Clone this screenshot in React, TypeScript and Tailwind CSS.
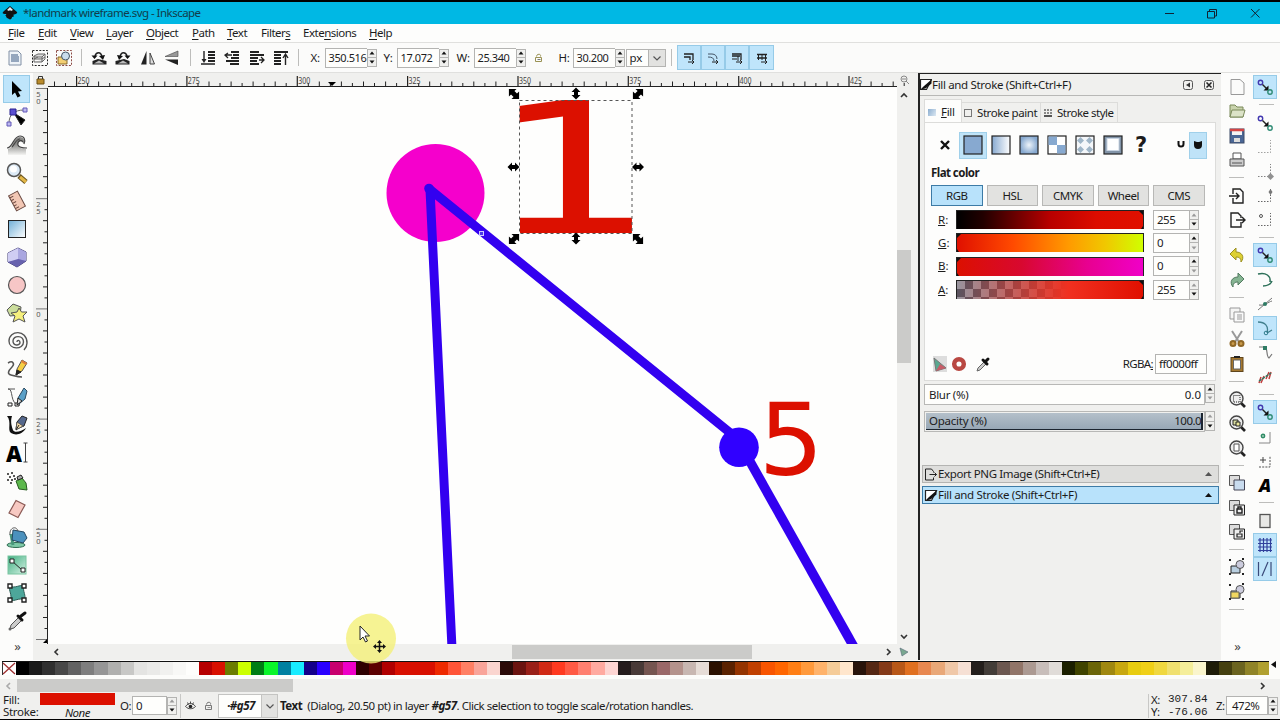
import React from 'react';

type IcoProps = { children: React.ReactNode; size?: number };

// every icon is drawn round its own centre, one unit per pixel
const Ico: React.FC<IcoProps> = ({ children, size = 24 }) => (
  <svg
    width={size}
    height={size}
    viewBox={`${-size / 2} ${-size / 2} ${size} ${size}`}
    fill="none"
    stroke="#222"
    strokeWidth="1"
    className="shrink-0"
  >
    {children}
  </svg>
);

const Sep: React.FC = () => <div className="h-[17px] w-px shrink-0 bg-[#bdbdbb]" />;

const Spin: React.FC<{ up?: boolean; down?: boolean; className?: string }> = ({ up = true, down = true, className = 'h-[18px]' }) => (
  <div className={`flex w-[10px] shrink-0 flex-col border border-[#b4b4b2] bg-[#f0f0ee] ${className}`}>
    <div className="flex flex-1 items-center justify-center border-b border-[#b4b4b2]">
      <svg width="6" height="4"><path d="M0.5 3.5L3 0.5L5.5 3.5Z" fill={up ? '#111' : '#999'} /></svg>
    </div>
    <div className="flex flex-1 items-center justify-center">
      <svg width="6" height="4"><path d="M0.5 0.5L3 3.5L5.5 0.5Z" fill={down ? '#111' : '#999'} /></svg>
    </div>
  </div>
);

const Chevron: React.FC<{ d: string; color?: string; width?: number }> = ({ d, color = '#333', width = 1.6 }) => (
  <svg width="10" height="10" viewBox="0 0 10 10" fill="none" stroke={color} strokeWidth={width}><path d={d} /></svg>
);

const menu = [
  { a: '', u: 'F', b: 'ile', w: 'w-[30px]' },
  { a: '', u: 'E', b: 'dit', w: 'w-[32px]' },
  { a: '', u: 'V', b: 'iew', w: 'w-[36px]' },
  { a: '', u: 'L', b: 'ayer', w: 'w-[40px]' },
  { a: '', u: 'O', b: 'bject', w: 'w-[46px]' },
  { a: '', u: 'P', b: 'ath', w: 'w-[35px]' },
  { a: '', u: 'T', b: 'ext', w: 'w-[34px]' },
  { a: 'Filter', u: 's', b: '', w: 'w-[42px]' },
  { a: 'Exte', u: 'n', b: 'sions', w: 'w-[66px]' },
  { a: '', u: 'H', b: 'elp', w: 'w-[30px]' },
];

const stack = <path d="M-6 -2L-2 -4H5L2 -1H-6ZM-6 1L-2 -1M-6 4H2L5 1M-6 -2V4M2 -1V4M5 -4V1M-6 1H2L5 -1" stroke="#666" fill="#ddd" />;

const selectIcons = [
  <g><path d="M-6 -7H3L6 -4V7H-6Z" fill="#eef3f8" stroke="#8190a5" /><path d="M-4 -3H3M-4 -1H4M-4 1H4M-4 3H4" stroke="#3d5b83" /></g>,
  <g><rect x="-7.5" y="-7.5" width="15" height="15" strokeDasharray="2 1.4" />{stack}</g>,
  <g><rect x="-7.5" y="-7.5" width="15" height="15" stroke="#8c4a44" strokeDasharray="2 1.4" /><path d="M-6 -1H3V6H-6Z" fill="#f3cf72" stroke="#8a6a2a" /><circle cx="1.5" cy="-2" r="4" fill="#c9dcec" stroke="#456" /></g>,
];

const flipIcons = [
  <g><path d="M-6.500 6V3L-1 1L7.500 3V6.500H-6.500Z" fill="#222" stroke="none" /><path d="M-5 5.500L0 2.500L5 5.500Z" fill="#bbb" stroke="none" /><path d="M-4 -2C-3 -6 2 -7 3 -1" strokeWidth="1.500" /><path d="M-7.500 -2.500H-1.500L-4.500 1ZM0 -2L4 2L6 -3Z" fill="#111" stroke="none" /></g>,
  <g><path d="M6.500 6V3L1 1L-7.500 3V6.500H6.500Z" fill="#222" stroke="none" /><path d="M5 5.500L0 2.500L-5 5.500Z" fill="#bbb" stroke="none" /><path d="M4 -2C3 -6 -2 -7 -3 -1" strokeWidth="1.500" /><path d="M7.500 -2.500H1.500L4.500 1ZM0 -2L-4 2L-6 -3Z" fill="#111" stroke="none" /></g>,
  <g><path d="M-1.500 -7V6.500H-7Z" fill="#222" stroke="none" /><path d="M2 -5L6.500 6H2Z" fill="#ddd" stroke="#444" /></g>,
  <g><path d="M-7 -1.500H6V-7Z" fill="#999" stroke="#444" strokeWidth=".6" /><path d="M-7 1.500H6V7Z" fill="#222" stroke="none" /></g>,
];

const orderIcons = [
  <g strokeWidth="2"><path d="M0 -6H7M0 -3H7M0 0H7M0 3H7" /><path d="M-7 6H7M-4 -7V3" strokeWidth="1.400" /><path d="M-6.500 1H-1.500L-4 5Z" fill="#222" stroke="none" /></g>,
  <g strokeWidth="2"><path d="M-1 -6H7M1 -3H7M-1 0H7M-6 3H7M-2 6H7" /><path d="M-7 -3H0M-4 -5L-7 -3L-4 0" strokeWidth="1.300" /></g>,
  <g strokeWidth="2"><path d="M-7 -6H2M-7 -3H7M-7 0H1M-7 3H0M-7 6H2" /><path d="M2 2H7M4 -1L7 2L4 5" strokeWidth="1.300" /></g>,
  <g strokeWidth="2"><path d="M-7 -6H7M-7 -3H0M-7 0H0M-7 3H0M-7 6H0" /><path d="M4.500 7V-3M2 0L4.500 -4L7 0" strokeWidth="1.400" /></g>,
];

const arrowDR = <path d="M-1 4H5M3 2L5 4L3 6" />;

const affectIcons = [
  <g><path d="M-5 -4H4V2M-5 -1H1V2" strokeWidth="1.300" />{arrowDR}</g>,
  <g><path d="M-5 -4H-1C2 -4 4 -2 4 1M-5 -1C-1 -1 1 0 1 3" stroke="#456" />{arrowDR}</g>,
  <g><path d="M-5 -4H4V2M-5 -2H3" strokeWidth="1.300" /><path d="M-5 1H0M1 -2V3" />{arrowDR}</g>,
  <g><path d="M-5 -3.500H5M-5 0H5" strokeWidth="1.300" /><path d="M-3.500 -4V2M0 -4V2M3.500 -4V2" />{arrowDR}</g>,
];

const tools = [
  <path d="M-5 -8V6L-2 3.500L0.500 8.500L3.500 7L1 2.500L5 2Z" fill="#000" stroke="none" />,
  <g><path d="M-8 6C-8 -2 -3 -7 7 -7" stroke="#666" /><path d="M-3 -4L8 3L4 8Z" fill="#000" /><path d="M-7 -8H-1V-2H-7Z" fill="#5a4fd0" stroke="#2a2390" /><path d="M6 -9H10V-5H6ZM-10 5H-6V9H-10Z" fill="#bdb8f0" stroke="#6258b8" /></g>,
  <g><path d="M-9 4C-4 4 -4 -8 3 -8C7 -8 8 -4 7 -1C5 -5 0 -4 1 0C2 3 6 4 9 4V10H-9Z" fill="url(#gWave)" stroke="none" /><path d="M-10 3C-4 3 -4 -9 3 -9C7 -9 9 -5 7 -1M6 -3C4 -6 0 -4 1 0C2 3 6 3 10 3M-5 2C-2 -1 -1 -6 3 -6" strokeWidth="1.200" stroke="#444" /></g>,
  <g><path d="M2 3L9 9" stroke="#6a5520" strokeWidth="5" /><path d="M3 4L9 9" stroke="#e2b647" strokeWidth="3" /><circle cx="-3" cy="-3" r="6.500" fill="#dceaf6" stroke="#555" strokeWidth="1.500" /><circle cx="-3.500" cy="-4" r="3.500" fill="#fff" stroke="none" /></g>,
  <g transform="rotate(-28)"><rect x="-5" y="-8.500" width="10" height="17" fill="#f2c7b4" stroke="#6b4a42" /><path d="M-5 -6H-1M-5 -3H-2M-5 0H-1M-5 3H-2M-5 6H-1" stroke="#6b4a42" /></g>,
  <rect x="-8.500" y="-8.500" width="17" height="17" fill="url(#gRect)" />,
  <g stroke="#433f75"><path d="M-9 -4L1 -9L9 -5V4L0 10L-9 5Z" fill="#8a86cc" /><path d="M-9 -4L1 -9V3L-9 5Z" fill="#cfcdf3" stroke="none" /><path d="M1 -9L9 -5V4L1 2Z" fill="#aaa7e0" stroke="none" /><path d="M-9 5L1 2L9 4L0 10Z" fill="#6762ae" stroke="none" /></g>,
  <circle r="8.500" fill="#f7c6c6" stroke="#555" strokeWidth="1.2" />,
  <g stroke="#555"><path d="M-10 -3L-4 -9L4 -6L3 2L-7 3Z" fill="#cbdd9c" /><path d="M2 -5L4.500 -1L10 -1L6 3L8 9L2 6L-4 9L-2 3L-6 0L0 -1Z" fill="#f5ef7c" /></g>,
  <path d="M0 1C0 -1.500 3 -1 3 1.500C3 5 -4 5 -4 0C-4 -6 6.500 -6 6.500 1C6.500 9 -8 9 -8 0C-8 -11 10 -12 10 2C10 5 9 7 7 9" stroke="#555" strokeWidth="1.400" />,
  <g><path d="M-9 -6C-4 -9 -2 -5 -5 -2C-9 2 -10 5 -6 6C-2 7 1 8 5 8" strokeWidth="1.500" stroke="#555" /><path d="M-1 6L0 0L5 -9L10 -6L5 2Z" fill="#f6cf45" stroke="#555" /><path d="M5 -9L10 -6L9 -4L4 -7Z" fill="#e0803c" stroke="none" /><path d="M-1 6L0 1L4 3Z" fill="#222" /></g>,
  <g><path d="M-9 -8C-3 -9 -8 8 3 8M-9 -8H-2" stroke="#555" /><path d="M-9 6H-5V9H-9ZM-2 6H2V9H-2Z" fill="#fff" /><path d="M1 1L7 -9L10 -6L8 2L2 7Z" fill="#5aa0c8" stroke="#2c4a60" /><path d="M1 1L5 4L0 8Z" fill="#ddd" /></g>,
  <g><path d="M-10 -9H-5C-7 -3 -5 2 -4 5C-3 8 4 7 9 3C6 9 -1 11 -6 8C-10 5 -5 -3 -10 -9Z" fill="#111" stroke="none" /><path d="M-1 4L0 -3L5 -9L10 -7L7 1Z" fill="#55688c" /><path d="M-1 5L0 -3L6 1Z" fill="#f6dca8" stroke="#555" /><path d="M-1 5L2 0" /></g>,
  <g><path d="M6.500 -10H10.500M8.500 -10V9M6.500 9H10.500" stroke="#444" /></g>,
  <g><path d="M-10 -7h2M-6 -8h2M-8 -4h2M-4 -5h2M-10 -1h2M-6 -1h2M-3 -2h2M-7 2h2" strokeWidth="1.600" /><path d="M-1 0L5 -3L9 2L10 9L2 8Z" fill="#5cb84c" stroke="#285c20" /><path d="M0 -4L4 -6L6 -3L1 -1Z" fill="#aaa" /></g>,
  <path d="M-1 -8.500L8 -4L1 8.500L-8 4Z" fill="#f7c9c2" stroke="#8a5a55" strokeWidth="1.200" />,
  <g><ellipse cx="-1" cy="8" rx="9" ry="2.500" fill="#7ec9a7" stroke="#2e6b50" /><path d="M-6 -3L-4 8" stroke="#49977a" strokeWidth="3" /><path d="M-4 -7L7 -5L10 1L6 6L-5 3Z" fill="#4b91bd" stroke="#234760" /><path d="M-7 -2C-8 -9 -1 -12 1 -6" stroke="#555" /></g>,
  <g><rect x="-9" y="-9" width="18" height="18" fill="url(#gGreen)" stroke="#78c4a0" /><path d="M-5 -4L5 5" /><path d="M-7 -6H-3V-2H-7ZM4 3H8V7H4Z" fill="#fff" /></g>,
  <g><path d="M-7 -7C-2 -4 3 -9 7 -7C5 -2 10 3 7 7C2 4 -2 9 -7 7C-4 2 -9 -2 -7 -7Z" fill="#4da69a" stroke="#2c5f58" /><path d="M-9 -9H-5V-5H-9ZM5 -9H9V-5H5ZM-9 5H-5V9H-9ZM5 5H9V9H5Z" fill="#fff" strokeWidth="1.400" /></g>,
  <g><path d="M-7 8L-6 4L2 -4L5 -1L-3 7Z" fill="#ccc" stroke="#555" /><path d="M1 -5L5 -1M4 -5L8 -8" strokeWidth="3" stroke="#111" strokeLinecap="round" /><circle cx="-7" cy="8" r="1.500" fill="#666" stroke="none" /></g>,
];

const lens = (
  <g><path d="M4 4L8 8" strokeWidth="2.600" /><circle r="6.500" cx="-.5" cy="-.5" fill="#eee" stroke="#444" strokeWidth="1.400" /></g>
);
const dup = <path d="M-7.500 -7.500H2.500V2.500H-7.500Z" fill="#ddd" stroke="#555" />;
const grp = <g><path d="M-6 -1H3V6H-6Z" fill="#b9cfe0" /><circle cx="3" cy="-2.500" r="4" fill="#ccd" stroke="#555" /><path d="M-8 -7h2M5 -8h2M-8 7h2M5 7h2" strokeWidth="2" /></g>;

const SEP = null;
const commands: (React.ReactNode | null)[] = [
  <path d="M-6 -7.500H3L7 -4V7.500H-6Z" fill="#fbfbfa" stroke="#999" />,
  <g stroke="#7b8a5b"><path d="M-7 6V-6H-2L0 -4H6V6Z" fill="#c9d3ad" /><path d="M-7 6L-5 -1H8L6 6Z" fill="#dce3c8" /></g>,
  <g><rect x="-7" y="-7" width="14" height="14" fill="#4a6796" stroke="#3c4a66" /><path d="M-5 -7H5V-1H-5Z" fill="#f4f4f4" stroke="none" /><path d="M-7 -6H7" stroke="#d44545" strokeWidth="2.500" /><path d="M-3 2H3V6H-3Z" fill="#ddd" stroke="none" /></g>,
  <g stroke="#555"><path d="M-4 -7H4V-1H-4Z" fill="#fff" /><path d="M-7 -1H7V6H-7Z" fill="#ccc" /><path d="M-5 3H5" /></g>,
  SEP,
  <g><path d="M-4 -2V-7H3L6 -4V7H-4V2" strokeWidth="1.400" /><path d="M-8 0H2M-1 -3L2 0L-1 3" strokeWidth="1.400" /></g>,
  <g><path d="M4 -2V-4L1 -7H-6V7H4V2" strokeWidth="1.400" /><path d="M-1 0H8M5 -3L8 0L5 3" strokeWidth="1.400" /></g>,
  SEP,
  <path d="M-7 -1L-1 -7V-3C5 -3 8 2 4 7C4 3 2 2 -1 2V5Z" fill="#ddd033" stroke="#9b9022" />,
  <path d="M7 -1L1 -7V-3C-5 -3 -8 2 -4 7C-4 3 -2 2 1 2V5Z" fill="#86b593" stroke="#527a60" />,
  SEP,
  <g stroke="#999"><path d="M-7 -7H3V4H-7Z" fill="#f5f5f4" /><path d="M-3 -3H7V7H-3Z" fill="#fafafa" /><path d="M0 0H5M0 2H5M0 4H5" /></g>,
  <g><path d="M-5 -8L2 3M5 -8L-2 3" stroke="#999" strokeWidth="2" /><circle cx="-4" cy="4.500" r="2.500" fill="#c99a4a" stroke="#8f6726" strokeWidth="2" /><circle cx="4" cy="4.500" r="2.500" fill="#c99a4a" stroke="#8f6726" strokeWidth="2" /></g>,
  <g><rect x="-6" y="-6.500" width="12" height="14" fill="#a5782f" stroke="#5f451c" /><path d="M-3.500 -4H3.500V5H-3.500Z" fill="#fff" stroke="#666" /><path d="M-3 -7H3" strokeWidth="2" /></g>,
  SEP,
  <g>{lens}<path d="M-3.500 -3.500H3V3H-3.500Z" strokeDasharray="1 1" /></g>,
  <g>{lens}<path d="M-4 -3H1V2H-4Z" fill="#d8dca0" /><path d="M-1 -1H3V3H-1Z" fill="#eae79a" /></g>,
  <g>{lens}<path d="M-3 -4H2V3H-3Z" fill="#fff" stroke="#555" /></g>,
  SEP,
  <g>{dup}<path d="M-3 -3H7.500V7H-3Z" fill="#c9dcef" stroke="#445" /></g>,
  <g>{dup}<path d="M-3 -3H7.500V7H-3Z" fill="#eee" /><path d="M0 1H5V5H0ZM1 1V-1H4V1" strokeWidth="1.400" /></g>,
  <g>{dup}<path d="M-3 -3H7.500V7H-3Z" fill="#eee" /><path d="M0 2H5V5H0ZM3 1V-1H6" strokeWidth="1.200" /></g>,
  SEP,
  grp,
  <g>{grp}<path d="M-6 0H2V6H-6Z" fill="#f0d860" stroke="#665" /></g>,
  SEP,
];

const link = (
  <g><circle cx="-4.500" cy="-4.500" r="2.200" stroke="#4238b0" strokeWidth="1.400" /><path d="M-2.500 -2.500L2 2" strokeWidth="1.400" /><path d="M3.500 3.500V-1.500L-1.500 3.500Z" fill="#111" stroke="none" /><circle cx="5" cy="5" r="2.200" stroke="#2e8b74" strokeWidth="1.400" /></g>
);
const corner = <path d="M-7 5.500H5.500V-7" stroke="#666" strokeDasharray="1.500 1.500" />;

const snaps: ({ on?: boolean; icon: React.ReactNode } | null)[] = [
  { on: true, icon: link },
  SEP,
  { icon: link },
  { icon: <g opacity=".6">{corner}</g> },
  { icon: <g opacity=".8">{corner}<path d="M5.500 2L9 5.500L5.500 9L2 5.500Z" fill="#777" stroke="none" /></g> },
  { icon: <g>{corner}<path d="M5.500 -7L7.500 -4L5.500 -1L3.500 -4Z" fill="#777" stroke="none" /></g> },
  { icon: <g>{corner}<circle cx="-4" cy="-4" r="1.500" stroke="#555" /></g> },
  SEP,
  { on: true, icon: link },
  { icon: <path d="M-7 -6C1 -8 6 -4 5 2M-2 6C2 6 6 4 7 1" stroke="#2d7059" strokeWidth="1.500" /> },
  { icon: <g><path d="M-7 6L7 -6M-6 1C0 2 3 -2 7 -3" stroke="#777" /><circle r="2" fill="#2e7b64" stroke="none" /></g> },
  { on: true, icon: <g><path d="M-7 -6C0 -6 4 -2 2 5M2 5L7 2" stroke="#42808f" strokeWidth="1.300" /><circle cx="1" cy="5" r="1.800" stroke="#2e7b8b" /></g> },
  { icon: <g><path d="M-6 -5H0C3 -3 1 4 4 6L7 2" stroke="#777" strokeWidth="1.200" /><path d="M-2 -6H2V-2H-2Z" fill="#2e7b64" stroke="none" /></g> },
  { icon: <g strokeWidth="1.500"><path d="M-6 6L-4 0M-4 6L-1 -1M1 2L4 -5M4 2L6 -5" stroke="#c24040" /><path d="M-6 4L6 -4" stroke="#2e7b64" strokeDasharray="3 1" /></g> },
  SEP,
  { on: true, icon: link },
  { icon: <g><path d="M-6 6H5V-5" stroke="#888" /><circle cx="-2" cy="-1" r="1.600" stroke="#2e8b64" strokeWidth="1.600" /></g> },
  { icon: <g><path d="M-6 6H5V-5" stroke="#555" strokeDasharray="2 1.200" /><path d="M-5 -1H1M-2 -4V2" stroke="#444" /></g> },
  { icon: 'A' },
  SEP,
  { icon: <rect x="-5" y="-6.500" width="10" height="13" fill="#e8e8e6" stroke="#555" strokeWidth="1.300" /> },
  { on: true, icon: <path d="M-7 -5H7M-7 -1.500H7M-7 2H7M-7 5.500H7M-5 -7V7M-1.500 -7V7M2 -7V7M5.500 -7V7" stroke="#2f3f9c" strokeWidth="1.200" /> },
  { on: true, icon: <path d="M-6.500 -7V7M6 -7V7M-3 7L3 -7" stroke="#3a4a7a" strokeWidth="1.200" /> },
];

const palette = [
  '#000', '#1a1a1a', '#303030', '#484848', '#626262', '#7e7e7e', '#969696', '#b0b0ae', '#c8c8c6', '#e4e4e2', '#eaeae8', '#f1f1ef', '#f8f8f6', '#fefefc',
  '#b60000', '#d81000', '#6b7d00', '#ccff00', '#007d14', '#0af52a', '#0080a0', '#18ecff', '#14008a', '#2a00ff', '#c8006e', '#ee00c8',
  '#2e0000', '#5c0000', '#b00000', '#d81000', '#d81000', '#d81000', '#ee2a00', '#ff5538', '#ff8064', '#f9a59a', '#fad5cf',
  '#2b0b08', '#6b1410', '#992018', '#d02a15', '#ff3a20', '#ff5a44', '#ff8070', '#ffaaa0', '#fdd5d2',
  '#241c1c', '#483a37', '#755550', '#9a6868', '#b4938c', '#c8b7b1', '#e6dcd6',
  '#2b1100', '#5a2200', '#943400', '#c04000', '#f85500', '#ff6600', '#ff7f15', '#ff9a3c', '#ffb36b', '#f5cc98', '#ffe6cc',
  '#28140b', '#552814', '#843a18', '#b85818', '#e07020', '#e88850', '#e9a878', '#f0c8a8', '#f6e0d4',
  '#241f1c', '#433d38', '#6c5850', '#917568', '#ac9a92', '#c8beba', '#e0dcd8',
  '#1c2000', '#404400', '#6b6508', '#a08810', '#c8a810', '#e8cc10', '#f0d018', '#f0d840', '#f0e070', '#f5ee9a', '#faf5cc',
  '#1e1c08', '#454010', '#6b6420', '#908428', '#b0a030',
];

const Field: React.FC<{ label: string; value: string; lw: string }> = ({ label, value, lw }) => (
  <div className="flex shrink-0 items-center">
    <span className={`shrink-0 ${lw}`}>{label}</span>
    <span className="flex h-[20px] w-[42px] shrink-0 items-center border border-r-0 border-[#b4b4b2] bg-[#fefefc] pl-[3px] text-[11px] tracking-[-0.4px]">{value}</span>
    <Spin />
  </div>
);

const TopRuler: React.FC = () => (
  <svg width="863" height="14" viewBox="48 73 863 14" className="shrink-0">
    <path d="M48 86.500H897" stroke="#222" />
    {Array.from({ length: 78 }, (_, i) => {
      const x = 54.500 + i * 11.035;
      const k = (i - 2 + 10) % 10;
      return <path key={i} d={`M${x.toFixed(1)} 86V${k === 0 ? 76 : k % 2 ? 83 : 81.500}`} stroke="#222" strokeWidth={k === 0 ? 1.2 : 1} />;
    })}
    {[250, 275, 300, 325, 350, 375, 400, 425].map((n, i) => (
      <text key={n} x={77.5 + i * 110.35} y="83.500" fontSize="8.500" textLength="12" lengthAdjust="spacingAndGlyphs" fill="#444">{n}</text>
    ))}
    <path d="M328 82H336L332 86Z" fill="#000" />
    <g fill="none" stroke="#888"><circle cx="904" cy="79" r="3" /><path d="M902 79H906M906 81L909 84" /></g>
  </svg>
);

const LeftRuler: React.FC = () => (
  <svg width="15" height="573" viewBox="33 87 15 573" className="shrink-0">
    <path d="M47.500 88V644" stroke="#222" />
    {Array.from({ length: 51 }, (_, i) => {
      const y = 88.500 + i * 11.02;
      const k = i % 10;
      return <path key={i} d={`M47 ${y.toFixed(1)}H${k === 0 ? 36 : k % 2 ? 44.500 : 43}`} stroke={k === 0 ? '#777' : '#222'} />;
    })}
    {['50', '25', '0', '-25', '-50'].map((s, i) =>
      s.split('').map((c, j) => (
        <text key={`${i}-${j}`} x="38.500" y={(s[0] === '-' ? 89.500 : 96.500) + i * 110.2 + j * 7} textAnchor="middle" fontSize="7.500" fill="#555">{c}</text>
      ))
    )}
    <path d="M43 643L47 639V643Z" fill="#000" />
  </svg>
);

const handles = [
  [514, 94, 45, 1.2], [576, 93.5, 90, 1], [638, 94, -45, 1.2],
  [513.5, 167, 0, 1], [638, 167, 0, 1],
  [514, 239, -45, 1.2], [576, 238.5, 90, 1], [638, 239, 45, 1.2],
];

const Canvas: React.FC = () => (
  <svg width="849" height="557" viewBox="48 87 849 557" className="shrink-0 bg-[#fefefd]">
    <clipPath id="numeral"><rect x="519.700" y="99" width="113" height="136" /></clipPath>
    <circle cx="435.500" cy="193" r="49" fill="#f500cc" />
    <g stroke="#3300f0" strokeWidth="9" fill="none" strokeLinejoin="round">
      <path d="M452 648L430 189.500L739 440" />
      <path d="M743 449L854.500 648" strokeWidth="9.500" />
    </g>
    <circle cx="429" cy="188.500" r="4.800" fill="#3300f0" />
    <circle cx="739" cy="447.300" r="19.800" fill="#3000ff" />
    <rect x="479.500" y="231.500" width="4" height="4" fill="#4a35e8" stroke="#cfc8ff" />
    <g clipPath="url(#numeral)">
      <text transform="translate(486.900 233) scale(1.462 1)" fontFamily='"DejaVu Sans", sans-serif' fontSize="182.400" fill="#dc1000">1</text>
    </g>
    <text transform="translate(758.500 474.600) scale(1.030 1)" fontFamily='"DejaVu Sans", sans-serif' fontSize="99.600" fill="#dc1000">5</text>
    <rect x="519.500" y="100.500" width="112.500" height="133" fill="none" stroke="#555" strokeDasharray="3 3" />
    {handles.map(([x, y, r, s], i) => (
      <path key={i} transform={`translate(${x} ${y}) rotate(${r}) scale(${s})`} d="M-6 0L-1.500 -4.500V-2H1.500V-4.500L6 0L1.500 4.500V2H-1.500V4.500Z" fill="#000" />
    ))}
  </svg>
);

const sliders = [
  { name: 'R', value: '255', bg: 'bg-[linear-gradient(90deg,#000_0%,#200_14%,#b80000_50%,#dc0c00_75%,#e01000_100%)]', max: true },
  { name: 'G', value: '0', bg: 'bg-[linear-gradient(90deg,#e01000_0%,#ff4a00_30%,#ff9a00_60%,#f0c800_80%,#d0ff00_100%)]', max: false },
  { name: 'B', value: '0', bg: 'bg-[linear-gradient(90deg,#dc1000_0%,#d80830_35%,#e80090_70%,#f000c8_100%)]', max: false },
  { name: 'A', value: '255', bg: 'bg-[linear-gradient(90deg,rgba(220,16,0,0)_0%,#f03020_60%,#e01000_100%),repeating-conic-gradient(#5a5460_0_25%,#98949e_0_50%)] bg-[size:100%_100%,16px_16px]', max: true },
];

const paints = [
  <path d="M-4 -4L4 4M4 -4L-4 4" stroke="#111" strokeWidth="2.400" />,
  <rect x="-9" y="-9" width="18" height="18" fill="#87a9d0" strokeWidth="1.200" />,
  <rect x="-9" y="-9" width="18" height="18" fill="url(#gLin)" strokeWidth="1.200" />,
  <rect x="-9" y="-9" width="18" height="18" fill="url(#gRad)" strokeWidth="1.200" />,
  <g><rect x="-9" y="-9" width="18" height="18" fill="#fff" strokeWidth="1.200" /><path d="M-8.500 -8.500H0V0H-8.500ZM0 0H8.500V8.500H0Z" fill="#87a9d0" stroke="none" /></g>,
  <g><rect x="-9" y="-9" width="18" height="18" fill="#f4f7fa" strokeWidth="1.200" /><path d="M-4.500 -8L-1 -4.500L-4.500 -1L-8 -4.500ZM4.500 -8L8 -4.500L4.500 -1L1 -4.500ZM-4.500 1L-1 4.500L-4.500 8L-8 4.500ZM4.500 1L8 4.500L4.500 8L1 4.500Z" fill="#9fb6c8" stroke="none" /></g>,
  <g><rect x="-9" y="-9" width="18" height="18" fill="#8294a8" strokeWidth="1.200" /><rect x="-6" y="-6.500" width="12" height="12" fill="#fff" stroke="#c8d4e2" /></g>,
];

const penIcon = <g><path d="M-5 -5H6L1 5H-5Z" fill="#fff" strokeWidth="1.200" /><path d="M6 -5L-2 2L-5 5L0 4L6 -1Z" fill="#111" stroke="none" /></g>;
const exportIcon = <g><path d="M3 -2V-3L1 -5.500H-5V5.500H3V3M-1 0H6M4 -2L6 0L4 2" /></g>;

const FillStroke: React.FC = () => (
  <div className="flex w-[303px] shrink-0 flex-col border-l-2 border-t border-[#222] bg-[#f0f0ee]">
    <div className="flex h-[22px] shrink-0 items-center border-b border-[#b8b8b6]">
      <div className="-ml-px flex shrink-0"><Ico size={13}>{penIcon}</Ico></div>
      <span className="w-[250px] shrink-0 tracking-[-0.33px]">Fill and Stroke (Shift+Ctrl+F)</span>
      <Ico size={12}><rect x="-4.500" y="-4.500" width="9" height="9" rx="2" stroke="#555" /><path d="M2 -2.500V2.500L-2 0Z" fill="#333" stroke="none" /></Ico>
      <span className="w-[9px]" />
      <Ico size={12}><rect x="-4.500" y="-4.500" width="9" height="9" rx="2" stroke="#555" /><path d="M-2.500 -2.500L2.500 2.500M2.500 -2.500L-2.500 2.500" strokeWidth="1.500" /></Ico>
    </div>
    <div className="flex h-[26px] shrink-0 items-end pl-[4px] pt-[3px]">
      <div className="flex h-[23px] w-[38px] items-center gap-[5px] border border-b-0 border-[#dcdcda] bg-[#fdfdfc] pl-[3px] pt-[2px]">
        <span className="h-[7px] w-[8px] bg-[linear-gradient(120deg,#8caed0,#dce8f2)]" />
        <span className="tracking-[-0.3px]"><u>F</u>ill</span>
      </div>
      <div className="flex h-[20px] w-[79px] items-center gap-[5px] border-r border-t border-[#dcdcda] pl-[2px]">
        <span className="h-[8px] w-[8px] border border-[#777]" />
        <span className="whitespace-nowrap tracking-[-0.42px]">Stroke paint</span>
      </div>
      <div className="flex h-[20px] w-[77px] items-center gap-[4px] border-r border-t border-[#dcdcda] pl-[2px]">
        <Ico size={10}><path d="M-4 -3H4M-4 0H4" strokeDasharray="2 1" /><path d="M-4 3H4" strokeWidth="1.500" /></Ico>
        <span className="whitespace-nowrap tracking-[-0.5px]">Stroke style</span>
      </div>
    </div>
    <div className="mx-[4px] flex h-[259px] w-[292px] shrink-0 flex-col border border-[#dcdcda] bg-[#fdfdfc] pl-[6px]">
      <div className="mt-[8px] flex h-[28px] items-center">
        {paints.map((p, i) => (
          <div key={i} className={`flex h-[27px] w-[28px] shrink-0 items-center justify-center ${i === 1 ? 'border border-[#a0d0ea] bg-[#bfe3f8]' : ''}`}>
            <Ico size={22}>{p}</Ico>
          </div>
        ))}
        <span className="w-[28px] text-center font-[DejaVu_Sans] text-[21px] font-bold leading-none">?</span>
        <span className="w-[17px]" />
        <div className="flex w-[17px] justify-center"><Ico size={14}><path d="M-2.500 -4V-1A2.500 2.500 0 1 0 2.500 -1V-4" strokeWidth="2" stroke="#111" /></Ico></div>
        <div className="flex h-[27px] w-[18px] items-center justify-center border border-[#a0d0ea] bg-[#bfe3f8]">
          <Ico size={14}><path d="M-4 -4L-1 -3H1L4 -4V0A4 4 0 0 1 -4 0Z" fill="#111" stroke="none" /></Ico>
        </div>
      </div>
      <div className="mt-[4px] flex h-[20px] items-center font-bold tracking-[-0.55px]">Flat color</div>
      <div className="mt-[2px] flex h-[21px] gap-[4px]">
        {['RGB', 'HSL', 'CMYK', 'Wheel', 'CMS'].map((m, i) => (
          <div key={m} className={`flex w-[51.5px] items-center justify-center border tracking-[-0.5px] ${i === 0 ? 'border-[#3d7ba6] bg-[#b8e2fb]' : 'border-[#b8b8b6] bg-[#e2e2e0]'}`}>{m}</div>
        ))}
      </div>
      <div className="mt-[2px] flex flex-col">
        {sliders.map((s) => (
          <div key={s.name} className="flex h-[23.3px] items-center">
            <span className="w-[25px] shrink-0 pl-[7px]"><u>{s.name}</u>:</span>
            <div className={`flex h-[19px] w-[188px] shrink-0 border border-b-0 border-[#222] ${s.bg} ${s.max ? 'justify-end' : 'justify-start'}`}>
              <svg width="5" height="18"><path d={s.max ? 'M1 0H5V4ZM3 18H5V15Z' : 'M0 0H4L0 4ZM0 15V18H2Z'} fill="#111" /></svg>
            </div>
            <div className="ml-[9px] flex h-[20px] w-[36px] items-center border border-r-0 border-[#b4b4b2] bg-[#fefefc] pl-[3px] tracking-[-0.5px]">{s.value}</div>
            <Spin up={!s.max} down={s.max} className="h-[20px]" />
          </div>
        ))}
      </div>
      <div className="mt-[52px] flex h-[21px] items-center">
        <Ico size={18}><rect x="-7" y="-8" width="14" height="16" fill="#ddd" stroke="none" /><path d="M-6 -6L6 4L-4 7Z" fill="#5aa890" stroke="#777" /><path d="M0 0L6 4L-4 7Z" fill="#c85c68" stroke="none" /></Ico>
        <Ico size={20}><circle r="4.800" stroke="#b94842" strokeWidth="4.500" /></Ico>
        <span className="w-[4px]" />
        <Ico size={20}><path d="M-6 7L-5 4L1 -2L3 0L-3 6Z" fill="#ccc" stroke="#666" /><path d="M0 -4L4 0M3 -3L5 -5" strokeWidth="3" stroke="#111" strokeLinecap="round" /></Ico>
        <span className="ml-auto tracking-[-0.65px]">RGBA<u>:</u></span>
        <span className="ml-[2px] mr-[8px] flex h-[20px] w-[52px] items-center border border-[#b4b4b2] bg-[#fefefc] pl-[3px] tracking-[-0.45px]">ff0000ff</span>
      </div>
    </div>
    <div className="ml-[4px] mt-[3px] flex h-[21px] shrink-0">
      <div className="flex w-[281px] items-center justify-between border border-[#b8b8b6] bg-[#fefefc] pl-[4px] pr-[3px]"><span className="tracking-[-0.3px]">Blur (%)</span><span>0.0</span></div>
      <Spin down={false} className="h-[19px]" />
    </div>
    <div className="ml-[4px] mt-[6px] flex h-[21px] shrink-0">
      <div className="w-[281px] border border-[#b8b8b6] p-px">
        <div className="flex h-full items-center justify-between border-b border-r-2 border-[#1c2530] bg-[linear-gradient(#b4c0ca,#98a8b6)] pl-[3px]"><span className="tracking-[-0.25px]">Opacity (%)</span><span className="tracking-[-0.55px]">100.0</span></div>
      </div>
      <Spin up={false} className="h-[20px]" />
    </div>
    <div className="mx-[2px] mt-[33px] flex h-[18px] w-[297px] shrink-0 items-center border border-[#b4b4b2] bg-[#dededc]">
      <Ico size={15}>{exportIcon}</Ico>
      <span className="flex-1 tracking-[-0.38px]">Export PNG Image (Shift+Ctrl+E)</span>
      <svg width="18" height="4"><path d="M5 4L8.500 0L12 4Z" fill="#555" /></svg>
    </div>
    <div className="mx-[2px] mt-[3px] flex h-[18px] w-[297px] shrink-0 items-center border border-[#3d7ba6] bg-[#b8e2fb]">
      <Ico size={15}>{penIcon}</Ico>
      <span className="flex-1 tracking-[-0.33px]">Fill and Stroke (Shift+Ctrl+F)</span>
      <svg width="18" height="4"><path d="M5 4L8.500 0L12 4Z" fill="#111" /></svg>
    </div>
  </div>
);

const App: React.FC = () => (
  <div className="relative flex h-[720px] w-[1280px] flex-col overflow-hidden border-b border-black bg-[#f0f0ee] font-['Noto_Sans',sans-serif] text-[11.5px] leading-none text-[#1c1c1c]">
    <svg width="0" height="0" className="absolute">
      <defs>
        <linearGradient id="gRect" x2="1" y2="1"><stop stopColor="#6faed6" /><stop offset="1" stopColor="#fff" /></linearGradient>
        <linearGradient id="gGreen" x2="1" y2="1"><stop stopColor="#3fae80" /><stop offset="1" stopColor="#d5f2e4" /></linearGradient>
        <linearGradient id="gWave" x2="0" y2="1"><stop offset=".4" stopColor="#8a8a88" /><stop offset="1" stopColor="#f4f4f2" /></linearGradient>
        <linearGradient id="gLin"><stop stopColor="#87a9d0" /><stop offset="1" stopColor="#fff" /></linearGradient>
        <radialGradient id="gRad"><stop stopColor="#eef4fa" /><stop offset="1" stopColor="#87a9d0" /></radialGradient>
      </defs>
    </svg>

    <header className="flex h-[24px] shrink-0 items-center border-t-2 border-black bg-[#00b8e4] pl-px text-[#123c4a]">
      <Ico size={18}>
        <path d="M0 -7L7 -1C8 1 4 1 3 2C5 3 3 4 2 4C2 6 0 7 -1 6C-2 5 -4 5 -4 3C-6 3 -3 2 -4 1C-8 1 -8 0 -6 -2Z" fill="#111" stroke="none" />
        <path d="M-3 -3L0 -6L3 -3L1 -2L0 -3L-1 -2Z" fill="#e8f0f4" stroke="none" />
      </Ico>
      <span className="ml-[4px] flex-1 tracking-[-0.53px]">*landmark wireframe.svg - Inkscape</span>
      <div className="flex w-[115px] items-center">
        <svg width="10" height="10" className="mr-[32px]"><path d="M0 5.500H9" stroke="#123" /></svg>
        <svg width="11" height="11" className="mr-[32px]" fill="none" stroke="#123"><path d="M0.500 3.500H7.500V10H0.500ZM2.500 3V1.500H9.500V8H8" /></svg>
        <svg width="11" height="11" stroke="#123"><path d="M1 1L9.500 9.500M9.500 1L1 9.500" /></svg>
      </div>
    </header>

    <nav className="flex h-[19px] shrink-0 items-center border-b border-[#e0e0de] bg-[#fdfdfc] pl-[8px]">
      {menu.map((m) => (
        <span key={m.u + m.b} className={`shrink-0 tracking-[-0.5px] ${m.w}`}>{m.a}<span className="underline decoration-1 underline-offset-2">{m.u}</span>{m.b}</span>
      ))}
    </nav>

    <div className="flex h-[30px] shrink-0 items-center border-b border-[#e0e0de] bg-[#fbfbfa] pl-[3px] tracking-[-0.2px]">
      {selectIcons.map((c, i) => <div key={i} className="w-[24.5px] shrink-0"><Ico>{c}</Ico></div>)}
      <span className="w-[4px]" /><Sep /><span className="w-[5px]" />
      {flipIcons.map((c, i) => <div key={i} className="w-[24.5px] shrink-0"><Ico>{c}</Ico></div>)}
      <span className="w-[5px]" /><Sep /><span className="w-[5px]" />
      {orderIcons.map((c, i) => <div key={i} className="w-[24.5px] shrink-0"><Ico>{c}</Ico></div>)}
      <span className="w-[4px]" /><Sep /><span className="w-[12px]" />
      <Field label="X:" value="350.516" lw="w-[14px]" />
      <span className="w-[7px]" />
      <Field label="Y:" value="17.072" lw="w-[13px]" />
      <span className="w-[8px]" />
      <Field label="W:" value="25.340" lw="w-[17px]" />
      <div className="flex w-[33px] shrink-0 pl-[6px]">
        <Ico size={13}><path d="M-3 0H3V4H-3ZM-2 -1C-2 -4 3 -4 2 -1" stroke="#9a9254" /><path d="M-1 2H2" stroke="#777" /></Ico>
      </div>
      <Field label="H:" value="30.200" lw="w-[14px]" />
      <div className="ml-px flex h-[18px] w-[40px] shrink-0 items-center border border-[#b4b4b2] bg-[#fefefc] pl-[3px]">
        <span className="flex-1">px</span>
        <span className="flex h-full w-[17px] items-center justify-center border-l border-[#b4b4b2] bg-[#e2e2e0]"><Chevron d="M1.500 3.500L5 7L8.500 3.500" color="#555" width={1.2} /></span>
      </div>
      <span className="w-[5px]" /><Sep /><span className="w-[5px]" />
      {affectIcons.map((c, i) => (
        <div key={i} className="flex h-[25px] w-[24.3px] shrink-0 items-center justify-center border border-[#96cbe8] bg-[#bfe5fb]"><Ico size={18}>{c}</Ico></div>
      ))}
    </div>

    <main className="flex h-[587px] shrink-0">
      <div className="flex w-[33px] shrink-0 flex-col items-center bg-[#fcfcfb] pt-[2px]">
        {tools.map((t, i) => (
          <div key={i} className={`relative flex h-[28px] w-[27px] shrink-0 items-center justify-center ${i === 0 ? 'border border-[#96cbe8] bg-[#bfe5fb]' : ''}`}>
            <Ico>{t}</Ico>
            {i === 13 && <span className="absolute left-[3px] top-[3px] font-['Open_Sans'] text-[22px] font-extrabold leading-none text-black">A</span>}
          </div>
        ))}
        <span className="mt-px flex h-[20px] items-center pl-[2px] text-[13px] text-[#444]">»</span>
      </div>

      <div className="flex w-[885px] shrink-0 flex-col">
        <div className="flex h-[14px] shrink-0">
          <div className="w-[15px] shrink-0 pl-[2px] pt-[2px]">
            <svg width="11" height="10" fill="none"><path d="M2 4H9V9H2Z" fill="#b98b2c" stroke="#6d5116" /><path d="M3.500 4V1.500H7.500V4" stroke="#333" /></svg>
          </div>
          <TopRuler />
        </div>
        <div className="flex h-[573px] shrink-0">
          <LeftRuler />
          <div className="flex w-[849px] shrink-0 flex-col">
            <Canvas />
            <div className="flex h-[16px] items-center pl-[4px]">
              <Chevron d="M6 2L3 5L6 8" />
              <span className="ml-[450px] h-[14px] w-[240px] bg-[#cbcbc9]" />
              <span className="ml-[132px]"><Chevron d="M3 2L6 5L3 8" /></span>
            </div>
          </div>
          <div className="flex w-[14px] shrink-0 flex-col items-center pt-[4px]">
            <Chevron d="M2 6L5 3L8 6" />
            <span className="mt-[149px] h-[113px] w-[14px] shrink-0 bg-[#cbcbc9]" />
            <span className="mt-[269px]"><Chevron d="M2 3L5 6L8 3" /></span>
            <svg width="10" height="10" className="mt-[5px] shrink-0"><path d="M1 1L9 5L3 9Z" fill="#7aa890" stroke="#567" strokeWidth=".6" /></svg>
          </div>
        </div>
      </div>

      <FillStroke />

      <div className="flex w-[31px] shrink-0 flex-col items-center bg-[#fcfcfb] pt-[2px]">
        {commands.map((c, i) =>
          c ? (
            <div key={i} className="flex h-[24.3px] shrink-0 items-center"><Ico size={22}>{c}</Ico></div>
          ) : (
            <div key={i} className="flex h-[11.2px] shrink-0 items-center"><span className="h-px w-[15px] bg-[#bdbdbb]" /></div>
          )
        )}
        <span className="mt-[22px] flex h-[20px] items-center pl-[2px] text-[13px] text-[#444]">»</span>
      </div>

      <div className="flex w-[28px] shrink-0 flex-col items-center bg-[#fcfcfb] pt-[2px]">
        {snaps.map((s, i) =>
          s ? (
            <div key={i} className={`-ml-[2px] flex h-[24.3px] w-[24px] shrink-0 items-center justify-center ${s.on ? 'border border-[#96cbe8] bg-[#bfe5fb]' : ''}`}>
              {s.icon === 'A' ? <span className="font-['Open_Sans'] text-[18px] font-extrabold italic text-black">A</span> : <Ico size={20}>{s.icon}</Ico>}
            </div>
          ) : (
            <div key={i} className="flex h-[11.2px] shrink-0 items-center"><span className="h-px w-[15px] bg-[#bdbdbb]" /></div>
          )
        )}
      </div>
    </main>

    <div className="flex h-[19px] shrink-0 items-start bg-[#fcfcfa] pt-px">
      <div className="ml-[2px] flex h-[14px] w-[1267px] shrink-0 overflow-hidden border-t border-[#111]">
        <svg width="14" height="13" className="shrink-0 bg-white"><path d="M1 1L13 12M13 1L1 12" stroke="#a03030" strokeWidth="1.300" /><path d="M.5 0V13" stroke="#333" /></svg>
        {palette.map((c, i) => <span key={i} className="h-[13px] w-[13.09px] shrink-0" style={{ backgroundColor: c }} />)}
      </div>
      <svg width="8" height="8" className="ml-[1px]"><path d="M6 0V7L1 3.500Z" fill="#111" /></svg>
    </div>

    <div className="flex h-[13px] shrink-0 items-center pl-[4px]">
      <Chevron d="M6 2L3 5L6 8" color="#aaa" />
      <span className="ml-[3px] h-[13px] w-[276px] bg-[#cbcbc9]" />
      <span className="ml-[965px]"><Chevron d="M3 2L6 5L3 8" /></span>
    </div>

    <footer className="flex h-[27px] shrink-0 items-center pl-[3px] tracking-[-0.46px]">
      <div className="flex w-[37px] shrink-0 flex-col gap-[1px] tracking-[-0.3px]"><span>Fill:</span><span>Stroke:</span></div>
      <div className="flex w-[75px] shrink-0 flex-col items-center gap-[2px] self-start pt-[1px]">
        <span className="h-[12px] w-full bg-[#dc1000]" />
        <span className="italic">None</span>
      </div>
      <span className="ml-[5px] w-[12px] shrink-0">O:</span>
      <span className="flex h-[19px] w-[35px] shrink-0 items-center border border-[#b4b4b2] bg-[#fefefc] pl-[3px]">0</span>
      <Spin up={false} />
      <span className="ml-[3px] h-[24px] w-px shrink-0 bg-[#c8c8c6]" />
      <span className="ml-[3px] flex w-[34px] shrink-0">
        <Ico size={13}><path d="M-5 1C-2 -3 2 -3 5 1C2 4 -2 4 -5 1M-3 -3L-2 -1M0 -4V-2M3 -3L2 -1" stroke="#444" /><circle cy="1" r="1.800" fill="#222" stroke="none" /></Ico>
        <span className="w-[5px]" />
        <Ico size={13}><path d="M-3 0H3V4H-3ZM-2 -1C-2 -4 3 -4 2 -1" stroke="#777" /><path d="M-1 2H2" stroke="#999" /></Ico>
      </span>
      <div className="flex h-[24px] w-[60px] shrink-0 items-center border border-[#c4c4c2] bg-[#fefefc]">
        <span className="flex-1 pl-[8px] font-bold italic">·#g57</span>
        <span className="flex h-full w-[16px] items-center justify-center border-l border-[#c4c4c2] bg-[#e2e2e0]"><Chevron d="M1.500 3.500L5 7L8.500 3.500" color="#555" width={1.2} /></span>
      </div>
      <span className="ml-[2px] flex-1 whitespace-pre"><b>Text</b>  (Dialog, 20.50 pt) in layer <b><i>#g57</i></b>. Click selection to toggle scale/rotation handles.</span>
      <span className="h-[24px] w-px shrink-0 bg-[#c8c8c6]" />
      <div className="ml-[2px] flex w-[17px] shrink-0 flex-col gap-[1px]"><span>X:</span><span>Y:</span></div>
      <div className="flex w-[48px] shrink-0 flex-col gap-[2px] font-['Liberation_Mono',monospace] text-[11px] tracking-[0px]"><span>307.84</span><span>-76.06</span></div>
      <span className="w-[10px] shrink-0">Z:</span>
      <span className="flex h-[19px] w-[42px] shrink-0 items-center border border-[#b4b4b2] bg-[#fefefc] pl-[5px]">472%</span>
      <Spin />
      <span className="w-[2px]" />
    </footer>

    {/* pointer with its click highlight */}
    <svg width="54" height="54" viewBox="345 612 54 54" className="pointer-events-none absolute left-[345px] top-[612px]">
      <circle cx="371" cy="638.500" r="25" fill="#f4f078" fillOpacity=".8" />
      <path d="M360 626V640L363 637L365.500 642L367.500 641L365 636H369.500Z" fill="#fff" stroke="#222" />
      <g stroke="#111" strokeWidth="1.500"><path d="M375 646.500H384M379.500 642V651" /></g>
      <path d="M379.500 640L382 643H377ZM379.500 653L382 650H377ZM373 646.500L376 644V649ZM386 646.500L383 644V649Z" fill="#111" />
    </svg>
  </div>
);

export default App;
